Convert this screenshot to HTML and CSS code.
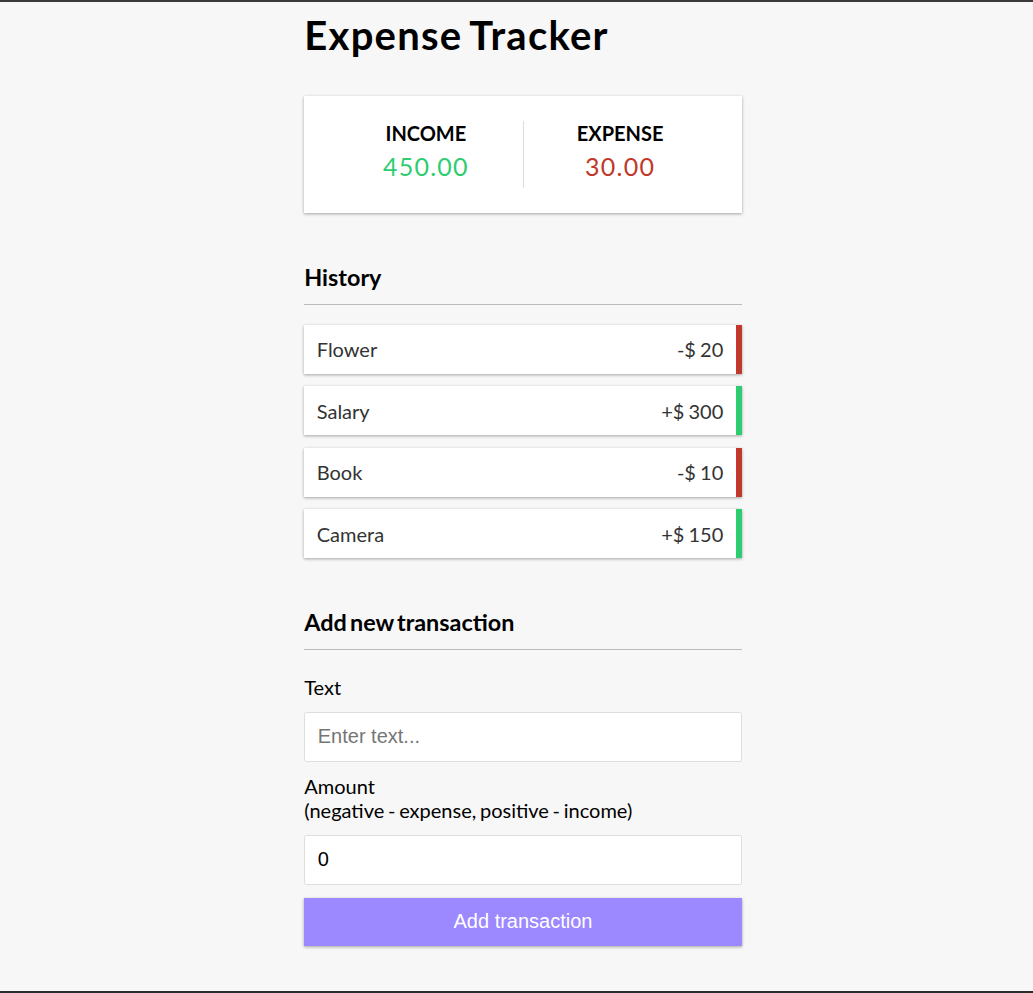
FILE: index.html
```html
<!DOCTYPE html>
<html lang="en">
<head>
<meta charset="UTF-8">
<title>Expense Tracker</title>
<link rel="stylesheet" href="styles.css">
</head>
<body>
<div class="container">
  <h1 class="title">Expense Tracker</h1>

  <div class="inc-exp-container">
    <div class="inc-exp-col">
      <h4 class="inc-exp-label">Income</h4>
      <p class="money plus">450.00</p>
    </div>
    <div class="inc-exp-col">
      <h4 class="inc-exp-label">Expense</h4>
      <p class="money minus">30.00</p>
    </div>
  </div>

  <h3 class="section-title">History</h3>
  <ul class="list">
    <li class="list-item minus"><span>Flower</span><span>-$ 20</span></li>
    <li class="list-item plus"><span>Salary</span><span>+$ 300</span></li>
    <li class="list-item minus"><span>Book</span><span>-$ 10</span></li>
    <li class="list-item plus"><span>Camera</span><span>+$ 150</span></li>
  </ul>

  <h3 class="section-title">Add new transaction</h3>
  <form class="form">
    <div class="form-control">
      <label class="form-label" for="text">Text</label>
      <input class="form-input" type="text" id="text" placeholder="Enter text...">
    </div>
    <div class="form-control">
      <label class="form-label" for="amount">Amount <br>(negative - expense, positive - income)</label>
      <input class="form-input" type="number" id="amount" value="0">
    </div>
    <button class="btn" type="button">Add transaction</button>
  </form>
</div>
</body>
</html>
```

FILE: styles.css
```css
* {
  box-sizing: border-box;
}

html,
body {
  margin: 0;
}

body {
  background-color: #f7f7f7;
  font-family: Lato, "Noto Sans", sans-serif;
  color: #000;
  padding: 0 0 0 13px;
  min-height: 100vh;
}

body::before,
body::after {
  content: "";
  position: fixed;
  left: 0;
  right: 0;
  height: 2px;
  background: #3a3a3a;
  z-index: 10;
}

body::before {
  top: 0;
}

body::after {
  bottom: 0;
  background: #2b2b2b;
}

.container {
  width: 437.5px;
  margin: 0 auto;
  padding-top: 11px;
}

.title {
  font-size: 40px;
  line-height: 48px;
  font-weight: 700;
  letter-spacing: 1.25px;
  word-spacing: -3px;
  margin: 0 0 37px;
}

.inc-exp-container {
  background-color: #fff;
  box-shadow: 0 1.25px 3.75px rgba(0, 0, 0, 0.12), 0 1.25px 2.5px rgba(0, 0, 0, 0.24);
  padding: 25px;
  display: flex;
  justify-content: space-between;
  margin: 0;
}

.inc-exp-col {
  flex: 1;
  text-align: center;
}

.inc-exp-col:first-child {
  border-right: 1.25px solid #dedede;
}

.inc-exp-label {
  margin: 0;
  font-size: 20px;
  line-height: 24px;
  font-weight: 700;
  text-transform: uppercase;
}

.money {
  font-size: 25px;
  line-height: 30px;
  letter-spacing: 1.25px;
  margin: 6.25px 0;
}

.money.plus {
  color: #2ecc71;
}

.money.minus {
  color: #c0392b;
}

.section-title {
  font-size: 23.4px;
  line-height: 28px;
  font-weight: 700;
  word-spacing: -2.5px;
  border-bottom: 1.25px solid #bbb;
  padding-bottom: 13px;
  margin: 50px 0 12.5px;
}

.list {
  list-style-type: none;
  padding: 0;
  margin: 20px 0 50px;
}

.list-item {
  background-color: #fff;
  box-shadow: 0 1.25px 3.75px rgba(0, 0, 0, 0.12), 0 1.25px 2.5px rgba(0, 0, 0, 0.24);
  color: #333;
  display: flex;
  justify-content: space-between;
  padding: 12.5px;
  margin: 12.5px 0;
  font-size: 20px;
  line-height: 24px;
  word-spacing: -1px;
}

.list-item.plus {
  border-right: 6.25px solid #2ecc71;
}

.list-item.minus {
  border-right: 6.25px solid #c0392b;
}

.form-control {
  font-size: 20px;
  line-height: 24px;
}

.form-label {
  display: inline-block;
  margin: 12.5px 0;
  word-spacing: -1.4px;
}

.form-input {
  border: 1.25px solid #dedede;
  border-radius: 2.5px;
  display: block;
  font-family: "Liberation Sans", Arial, sans-serif;
  font-size: 20px;
  line-height: 23px;
  padding: 12.5px;
  width: 100%;
  color: #000;
  background: #fff;
  margin: 0;
  -moz-appearance: textfield;
}

.form-input::placeholder {
  color: #757575;
}

.form-input::-webkit-inner-spin-button,
.form-input::-webkit-outer-spin-button {
  -webkit-appearance: none;
  margin: 0;
}

.btn {
  cursor: pointer;
  background-color: #9c88ff;
  box-shadow: 0 1.25px 3.75px rgba(0, 0, 0, 0.12), 0 1.25px 2.5px rgba(0, 0, 0, 0.24);
  color: #fff;
  border: 0;
  display: block;
  font-family: "Liberation Sans", Arial, sans-serif;
  font-size: 20px;
  line-height: 23.5px;
  margin: 13px 0 30px;
  padding: 12.5px;
  width: 100%;
}
```
